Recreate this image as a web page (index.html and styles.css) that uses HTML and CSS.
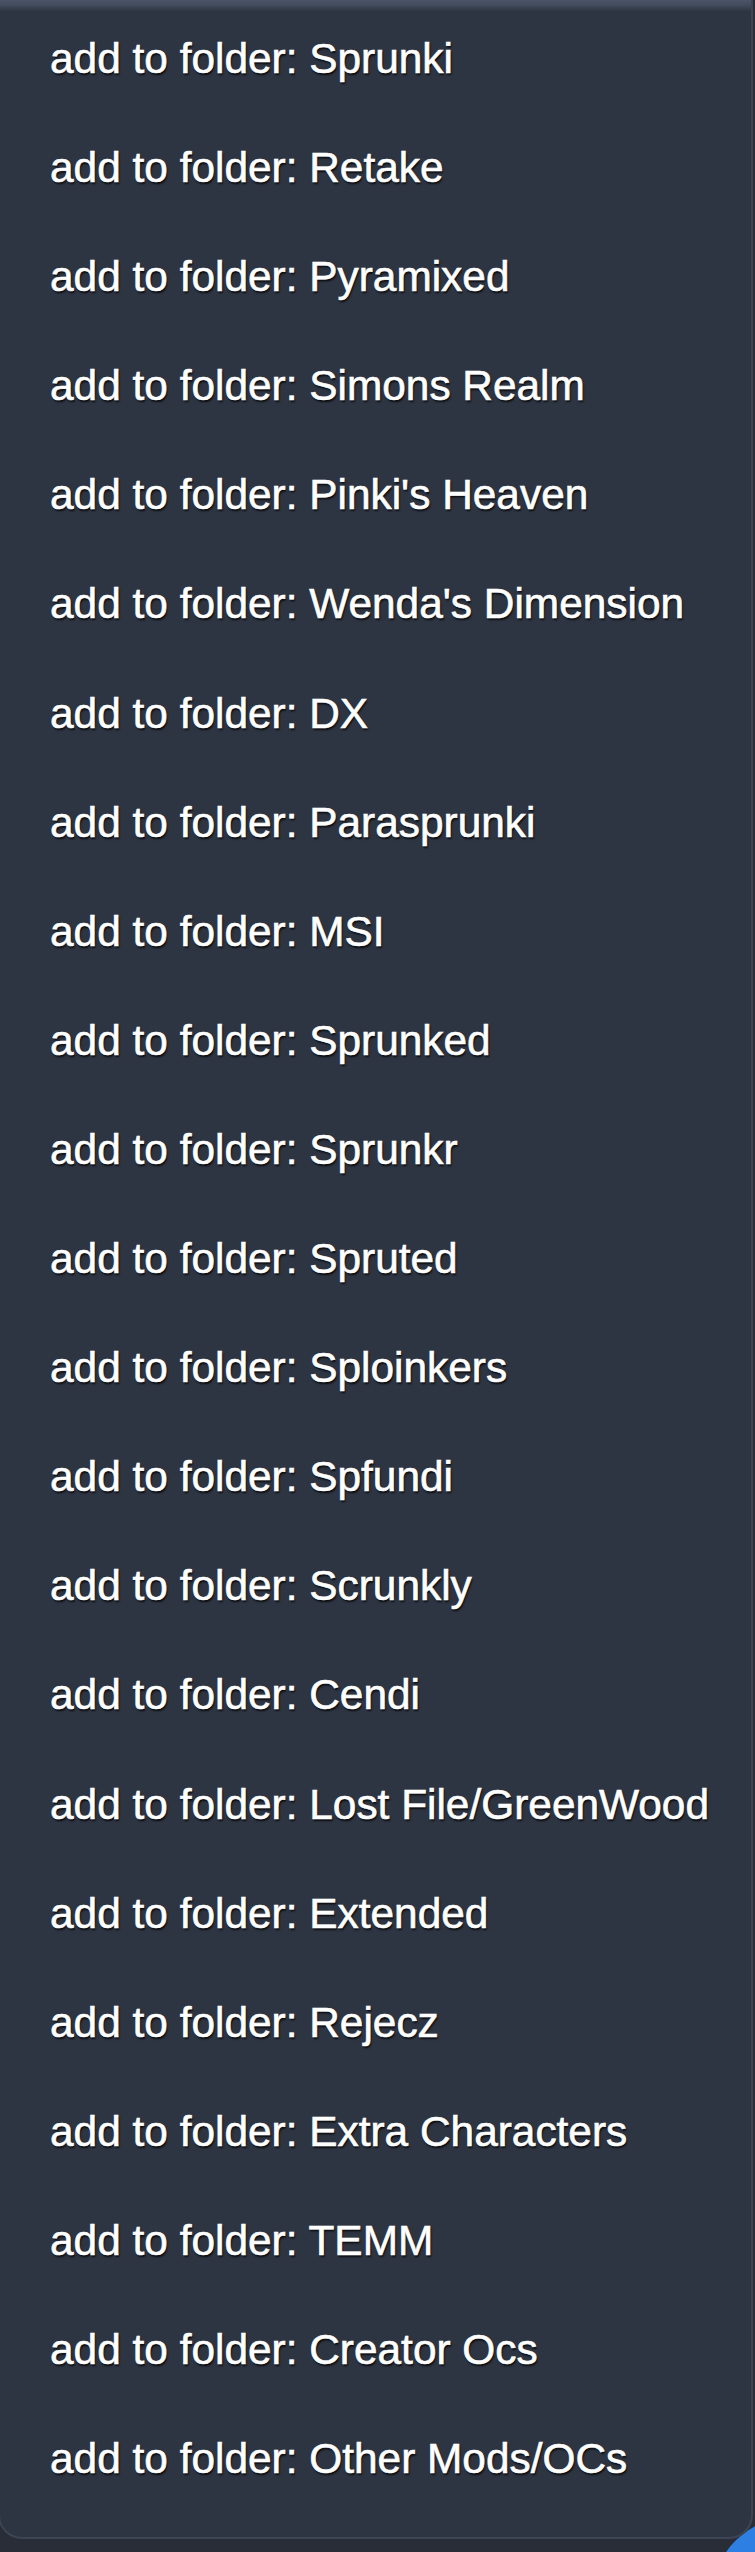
FILE: index.html
```html
<!DOCTYPE html>
<html lang="en">
<head>
    <meta charset="UTF-8">
    <meta name="viewport" content="width=device-width, initial-scale=1.0">
    <title>Folders</title>
    <link rel="stylesheet" href="styles.css">
</head>
<body>
    <div class="page">
        <ul class="folder-menu">
            <li class="menu-item">add to folder: Sprunki</li>
            <li class="menu-item">add to folder: Retake</li>
            <li class="menu-item">add to folder: Pyramixed</li>
            <li class="menu-item">add to folder: Simons Realm</li>
            <li class="menu-item">add to folder: Pinki's Heaven</li>
            <li class="menu-item">add to folder: Wenda's Dimension</li>
            <li class="menu-item">add to folder: DX</li>
            <li class="menu-item">add to folder: Parasprunki</li>
            <li class="menu-item">add to folder: MSI</li>
            <li class="menu-item">add to folder: Sprunked</li>
            <li class="menu-item">add to folder: Sprunkr</li>
            <li class="menu-item">add to folder: Spruted</li>
            <li class="menu-item">add to folder: Sploinkers</li>
            <li class="menu-item">add to folder: Spfundi</li>
            <li class="menu-item">add to folder: Scrunkly</li>
            <li class="menu-item">add to folder: Cendi</li>
            <li class="menu-item">add to folder: Lost File/GreenWood</li>
            <li class="menu-item">add to folder: Extended</li>
            <li class="menu-item">add to folder: Rejecz</li>
            <li class="menu-item">add to folder: Extra Characters</li>
            <li class="menu-item">add to folder: TEMM</li>
            <li class="menu-item">add to folder: Creator Ocs</li>
            <li class="menu-item">add to folder: Other Mods/OCs</li>
        </ul>
        <div class="menu-footer"></div>
        <div class="fab"></div>
    </div>
</body>
</html>
```

FILE: styles.css
```css
* {
    margin: 0;
    padding: 0;
    box-sizing: border-box;
}

body {
    background-color: #282d37;
    font-family: "Liberation Sans", Arial, sans-serif;
    overflow: hidden;
}

.page {
    position: relative;
    width: 755px;
    height: 2552px;
    overflow: hidden;
}

.folder-menu {
    position: relative;
    z-index: 1;
    list-style: none;
    margin: 0 2px 0 -2px;
    padding: 4px 0 24px 0;
    background: linear-gradient(to bottom, #4b5468 0px, #434b5e 5px, #2e3542 11px, #2e3542 100%);
    border: 2px solid #3d4453;
    border-top: none;
    border-radius: 0 0 24px 24px;
}

.menu-item {
    padding: 30px 0 30px 50px;
    font-size: 42.4px;
    line-height: 49.1px;
    color: #fff;
    white-space: nowrap;
    -webkit-text-stroke: 0.6px #fff;
    text-shadow: 1px 2px 2px rgba(0, 0, 0, 0.8);
    cursor: pointer;
}

.menu-footer {
    height: 13px;
}

.fab {
    position: absolute;
    left: 711px;
    top: 2516px;
    width: 168px;
    height: 168px;
    border-radius: 50%;
    background-color: #2d7fe3;
}
```
